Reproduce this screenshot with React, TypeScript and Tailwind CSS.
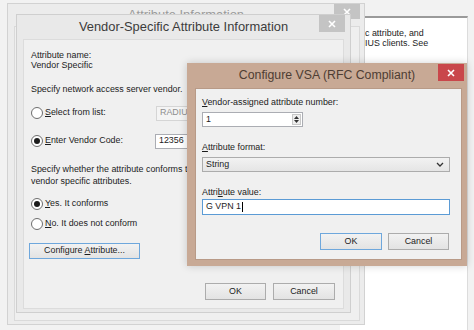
import type { ReactNode } from "react";

const body = "font-['Liberation_Sans',Arial,sans-serif]";

function Radio({ on }: { on?: boolean }) {
  return (
    <span className="flex h-[12px] w-[12px] shrink-0 items-center justify-center rounded-full border border-[#6e6e6e] bg-white">
      {on && <span className="h-[6px] w-[6px] rounded-full bg-[#1c1c1c]" />}
    </span>
  );
}

function Btn({ children, blue, className }: { children: ReactNode; blue?: boolean; className?: string }) {
  return (
    <div
      className={
        "flex items-center justify-center border bg-gradient-to-b from-[#f2f2f2] to-[#e3e3e3] text-[#1c1c1c] " +
        (blue ? "border-[#6ea7dc] " : "border-[#acacac] ") +
        (className ?? "")
      }
    >
      {children}
    </div>
  );
}

function Close({ red, className }: { red?: boolean; className?: string }) {
  return (
    <div
      className={
        "absolute flex items-center justify-center " +
        (red ? "bg-[#c9474b] " : "bg-[#c4c4c4] ") +
        (className ?? "")
      }
    >
      <svg width="8" height="8" viewBox="0 0 8 8">
        <path d="M1 1L7 7M7 1L1 7" stroke="white" strokeWidth="1.6" />
      </svg>
    </div>
  );
}

function U({ children }: { children: ReactNode }) {
  return <span className="underline underline-offset-[1px]">{children}</span>;
}

export default function App() {
  return (
    <div className={"relative h-[330px] w-[474px] overflow-hidden bg-[#f2f2f2] text-[8.9px] text-[#1c1c1c] " + body}>
      {/* main window text panel on the right */}
      <div className="absolute left-[340px] top-[16px] bottom-0 w-[128px] border-t-2 border-r border-[#9a9a9a] border-r-[#dcdcdc] bg-white">
        <div className="pl-[25px] pt-[10px] leading-[10px] whitespace-nowrap">
          <div>c attribute, and</div>
          <div>IUS clients. See</div>
        </div>
      </div>

      {/* Attribute Information (back) */}
      <div className="absolute left-[7px] top-[3px] h-[322px] w-[358px] border border-[#d2d2d2] bg-[#ececec]">
        <div className="h-[10px] overflow-hidden">
          <div className="flex h-[22px] items-center justify-center text-[12.9px] text-[#9a9a9a]">
            Attribute Information
          </div>
        </div>
        <Close className="right-[4px] top-0 h-[15px] w-[26px]" />
        <div className="absolute left-[6px] right-[4px] top-[22px] bottom-[3px] border border-[#dadada] bg-[#efefef]" />
      </div>

      {/* Vendor-Specific Attribute Information (middle) */}
      <div className="absolute left-[16px] top-[14px] flex h-[299px] w-[335px] flex-col border border-[#cfcfcf] bg-[#e9e9e9] px-[6px] pb-[3px]">
        <div className="flex h-[24px] shrink-0 items-center justify-center text-[12.9px] text-[#3c3c3c]">
          Vendor-Specific Attribute Information
        </div>
        <Close className="right-[5px] top-0 h-[17px] w-[26px]" />
        <div className="flex flex-1 flex-col overflow-hidden whitespace-nowrap border border-[#dcdcdc] bg-[#f0f0f0] pl-[7px] pr-[8px] pt-[10px]">
          <div className="h-[10px] leading-[10px]">Attribute name:</div>
          <div className="h-[10px] leading-[10px]">Vendor Specific</div>
          <div className="mt-[13px] h-[12px] leading-[12px]">Specify network access server vendor.</div>

          <div className="mt-[10px] flex h-[16px] items-center">
            <div className="flex w-[125px] items-center gap-[2px]">
              <Radio />
              <span>
                <U>S</U>elect from list:
              </span>
            </div>
            <div className="flex h-[15px] w-[120px] items-center border border-[#d5d5d5] bg-[#f4f4f4] pl-[3px] text-[#8e8e8e]">
              <span className="w-[27px] overflow-hidden">RADIUS</span>
            </div>
          </div>

          <div className="mt-[12px] flex h-[16px] items-center">
            <div className="flex w-[124px] items-center gap-[2px]">
              <Radio on />
              <span>
                <U>E</U>nter Vendor Code:
              </span>
            </div>
            <div className="flex h-[15px] w-[120px] items-center border border-[#abadb3] bg-white pl-[3px]">
              12356
            </div>
          </div>

          <div className="mt-[14px] h-[12px] w-[156px] overflow-hidden leading-[12px]">
            Specify whether the attribute conforms to
          </div>
          <div className="h-[12px] leading-[12px]">vendor specific attributes.</div>

          <div className="mt-[9px] flex h-[16px] items-center gap-[2px]">
            <Radio on />
            <span>
              <U>Y</U>es. It conforms
            </span>
          </div>
          <div className="mt-[4px] flex h-[16px] items-center gap-[2px]">
            <Radio />
            <span>
              <U>N</U>o. It does not conform
            </span>
          </div>

          <Btn blue className="-ml-[2px] mt-[11px] h-[16px] w-[111px]">
            <span>
              Configure <U>A</U>ttribute...
            </span>
          </Btn>

          <div className="mt-[24px] flex justify-end gap-[7px]">
            <Btn className="h-[17px] w-[61px]">OK</Btn>
            <Btn className="h-[17px] w-[62px]">Cancel</Btn>
          </div>
        </div>
      </div>

      {/* Configure VSA (front, active) */}
      <div className="absolute left-[187px] top-[63px] flex h-[203px] w-[280px] flex-col bg-[#c8a995] pb-[6px] pl-[8px] pr-[5px] shadow-[0_0_8px_rgba(0,0,0,0.18)]">
        <div className="flex h-[25px] shrink-0 items-center justify-center pr-[3px] text-[12.3px] text-[#4e3d33]">
          Configure VSA (RFC Compliant)
        </div>
        <Close red className="right-[3px] top-[1px] h-[17px] w-[26px]" />
        <div className="flex flex-1 flex-col border border-[#b89a87] bg-[#f0f0f0] pl-[6px] pt-[7px]">
          <div className="h-[12px] leading-[12px]">
            <U>V</U>endor-assigned attribute number:
          </div>
          <div className="mt-[4px] flex h-[15px] w-[101px] items-center border border-[#abadb3] bg-white">
            <span className="flex-1 pl-[3px]">1</span>
            <div className="mr-[1px] flex h-[11px] w-[9px] flex-col items-center justify-center gap-[1px] border border-[#c8c8c8] bg-[#eeeeee]">
              <svg width="5" height="3" viewBox="0 0 5 3">
                <path d="M0 3L2.5 0L5 3Z" fill="#333" />
              </svg>
              <svg width="5" height="3" viewBox="0 0 5 3">
                <path d="M0 0L2.5 3L5 0Z" fill="#333" />
              </svg>
            </div>
          </div>

          <div className="mt-[14px] h-[12px] leading-[12px]">
            <U>A</U>ttribute format:
          </div>
          <div className="mt-[4px] flex h-[15px] w-[248px] items-center border border-[#acacac] bg-gradient-to-b from-[#f2f2f2] to-[#e5e5e5] pl-[3px]">
            <span className="flex-1">String</span>
            <svg width="8" height="5" viewBox="0 0 8 5" className="mr-[5px]">
              <path d="M1 1L4 4L7 1" stroke="#333" strokeWidth="1.3" fill="none" />
            </svg>
          </div>

          <div className="mt-[14px] h-[12px] leading-[12px]">
            Attri<U>b</U>ute value:
          </div>
          <div className="mt-[1px] flex h-[16px] w-[248px] items-center border border-[#5b9bd5] bg-white pl-[3px]">
            <span>G VPN 1</span>
            <span className="ml-[1px] h-[10px] w-px bg-black" />
          </div>

          <div className="mt-[18px] flex gap-[6px] pl-[118px]">
            <Btn blue className="h-[17px] w-[62px]">OK</Btn>
            <Btn className="h-[17px] w-[61px]">Cancel</Btn>
          </div>
        </div>
      </div>
    </div>
  );
}
